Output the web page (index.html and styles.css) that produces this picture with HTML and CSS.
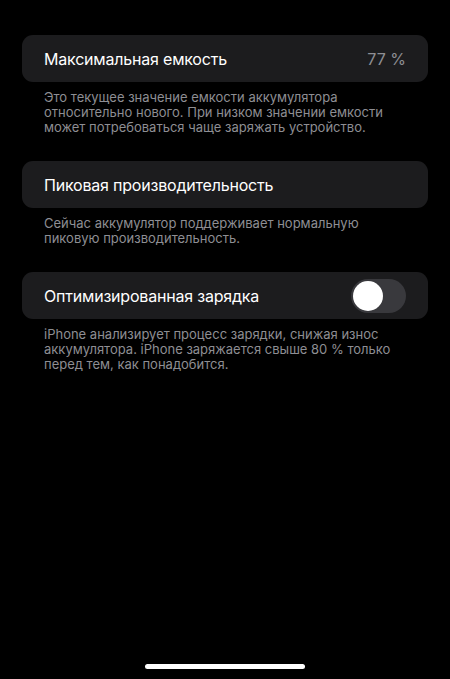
FILE: index.html
```html
<!DOCTYPE html>
<html lang="ru">
<head>
<meta charset="utf-8">
<link rel="stylesheet" href="styles.css">
</head>
<body>
<div class="screen">
  <div class="group">
    <div class="card">
      <span class="title">Максимальная емкость</span>
      <span class="value">77 %</span>
    </div>
    <p class="note">Это текущее значение емкости аккумулятора относительно нового. При низком значении емкости может потребоваться чаще заряжать устройство.</p>
  </div>
  <div class="group">
    <div class="card">
      <span class="title">Пиковая производительность</span>
    </div>
    <p class="note">Сейчас аккумулятор поддерживает нормальную пиковую производительность.</p>
  </div>
  <div class="group">
    <div class="card">
      <span class="title">Оптимизированная зарядка</span>
      <span class="toggle"><span class="knob"></span></span>
    </div>
    <p class="note">iPhone анализирует процесс зарядки, снижая износ аккумулятора. iPhone заряжается свыше 80 % только перед тем, как понадобится.</p>
  </div>
  <div class="spacer"></div>
  <div class="home"><span class="bar"></span></div>
</div>
</body>
</html>
```
FILE: styles.css
```css
html, body {
  margin: 0;
  padding: 0;
  background: #000;
}
body {
  font-family: Inter, "Noto Sans", sans-serif;
  color: #fff;
}
.screen {
  width: 450px;
  height: 679px;
  box-sizing: border-box;
  padding: 35px 22px 0;
  display: flex;
  flex-direction: column;
}
.group {
  margin-bottom: 26px;
}
.card {
  height: 47px;
  background: #1c1c1e;
  border-radius: 11px;
  padding: 0 22px;
  display: flex;
  align-items: center;
  justify-content: space-between;
}
.title {
  font-size: 16px;
  letter-spacing: -0.2px;
}
.value {
  font-size: 16px;
  color: #8e8e93;
}
.toggle {
  width: 55px;
  height: 34px;
  border-radius: 17px;
  background: #39393d;
  display: flex;
  align-items: center;
  padding: 0 2px;
  box-sizing: border-box;
}
.knob {
  width: 30px;
  height: 30px;
  border-radius: 50%;
  background: #fff;
}
.note {
  margin: 8px 0 0;
  padding: 0 22px;
  font-size: 13px;
  line-height: 15px;
  color: #8e8e93;
}
.spacer {
  flex: 1;
}
.home {
  height: 15px;
  display: flex;
  justify-content: center;
}
.bar {
  width: 160px;
  height: 5px;
  border-radius: 3px;
  background: #fff;
}
```
